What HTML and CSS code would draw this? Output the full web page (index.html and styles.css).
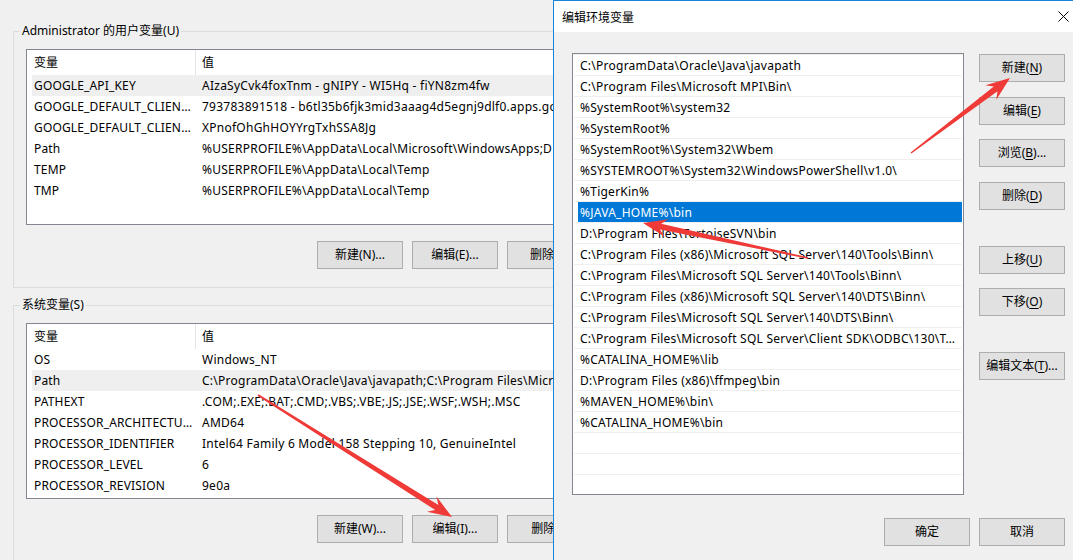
FILE: index.html
```html
<!DOCTYPE html>
<html lang="zh-CN">
<head>
<meta charset="utf-8">
<title>编辑环境变量</title>
<link rel="stylesheet" href="styles.css">
</head>
<body>
<div class="desk">
  <div class="env-window">
    <fieldset class="group">
      <legend>Administrator 的用户变量(U)</legend>
      <div class="list">
        <div class="list-head"><div class="hcell hname">变量</div><div class="hcell hval">值</div></div>
        <div class="row hl"><div class="cname">GOOGLE_API_KEY</div><div class="cval">AIzaSyCvk4foxTnm - gNIPY - WI5Hq - fiYN8zm4fw</div></div>
        <div class="row"><div class="cname">GOOGLE_DEFAULT_CLIENT_ID</div><div class="cval">793783891518 - b6tl35b6fjk3mid3aaag4d5egnj9dlf0.apps.go</div></div>
        <div class="row"><div class="cname">GOOGLE_DEFAULT_CLIENT_SECRET</div><div class="cval">XPnofOhGhHOYYrgTxhSSA8Jg</div></div>
        <div class="row"><div class="cname">Path</div><div class="cval">%USERPROFILE%\AppData\Local\Microsoft\WindowsApps;D</div></div>
        <div class="row"><div class="cname">TEMP</div><div class="cval">%USERPROFILE%\AppData\Local\Temp</div></div>
        <div class="row"><div class="cname">TMP</div><div class="cval">%USERPROFILE%\AppData\Local\Temp</div></div>
      </div>
      <div class="btns">
        <button class="btn">新建(N)...</button>
        <button class="btn">编辑(E)...</button>
        <button class="btn">删除(D)</button>
      </div>
    </fieldset>
    <fieldset class="group">
      <legend>系统变量(S)</legend>
      <div class="list">
        <div class="list-head"><div class="hcell hname">变量</div><div class="hcell hval">值</div></div>
        <div class="row"><div class="cname">OS</div><div class="cval">Windows_NT</div></div>
        <div class="row hl"><div class="cname">Path</div><div class="cval">C:\ProgramData\Oracle\Java\javapath;C:\Program Files\Micr</div></div>
        <div class="row"><div class="cname">PATHEXT</div><div class="cval">.COM;.EXE;.BAT;.CMD;.VBS;.VBE;.JS;.JSE;.WSF;.WSH;.MSC</div></div>
        <div class="row"><div class="cname">PROCESSOR_ARCHITECTURE</div><div class="cval">AMD64</div></div>
        <div class="row"><div class="cname">PROCESSOR_IDENTIFIER</div><div class="cval">Intel64 Family 6 Model 158 Stepping 10, GenuineIntel</div></div>
        <div class="row"><div class="cname">PROCESSOR_LEVEL</div><div class="cval">6</div></div>
        <div class="row"><div class="cname">PROCESSOR_REVISION</div><div class="cval">9e0a</div></div>
      </div>
      <div class="btns">
        <button class="btn">新建(W)...</button>
        <button class="btn">编辑(I)...</button>
        <button class="btn">删除(L)</button>
      </div>
    </fieldset>
  </div>

  <div class="dialog">
    <div class="titlebar">
      <span class="title">编辑环境变量</span>
      <span class="close"><svg width="11" height="11" viewBox="0 0 11 11"><path d="M0.5 0.5 L10.5 10.5 M10.5 0.5 L0.5 10.5" stroke="#000" stroke-width="1" fill="none"/></svg></span>
    </div>
    <div class="dlg-body">
      <div class="dlg-main">
        <div class="pathlist">
          <div class="prow"><span>C:\ProgramData\Oracle\Java\javapath</span></div>
          <div class="prow"><span>C:\Program Files\Microsoft MPI\Bin\</span></div>
          <div class="prow"><span>%SystemRoot%\system32</span></div>
          <div class="prow"><span>%SystemRoot%</span></div>
          <div class="prow"><span>%SystemRoot%\System32\Wbem</span></div>
          <div class="prow"><span>%SYSTEMROOT%\System32\WindowsPowerShell\v1.0\</span></div>
          <div class="prow"><span>%TigerKin%</span></div>
          <div class="prow sel"><span>%JAVA_HOME%\bin</span></div>
          <div class="prow"><span>D:\Program Files\TortoiseSVN\bin</span></div>
          <div class="prow"><span>C:\Program Files (x86)\Microsoft SQL Server\140\Tools\Binn\</span></div>
          <div class="prow"><span>C:\Program Files\Microsoft SQL Server\140\Tools\Binn\</span></div>
          <div class="prow"><span>C:\Program Files (x86)\Microsoft SQL Server\140\DTS\Binn\</span></div>
          <div class="prow"><span>C:\Program Files\Microsoft SQL Server\140\DTS\Binn\</span></div>
          <div class="prow"><span>C:\Program Files\Microsoft SQL Server\Client SDK\ODBC\130\Tools\Binn\</span></div>
          <div class="prow"><span>%CATALINA_HOME%\lib</span></div>
          <div class="prow"><span>D:\Program Files (x86)\ffmpeg\bin</span></div>
          <div class="prow"><span>%MAVEN_HOME%\bin\</span></div>
          <div class="prow"><span>%CATALINA_HOME%\bin</span></div>
          <div class="prow"><span></span></div>
          <div class="prow"><span></span></div>
          <div class="prow"><span></span></div>
        </div>
        <div class="side">
          <button class="btn">新建(<u>N</u>)</button>
          <button class="btn step">编辑(<u>E</u>)</button>
          <button class="btn step">浏览(<u>B</u>)...</button>
          <button class="btn step">删除(<u>D</u>)</button>
          <button class="btn far">上移(<u>U</u>)</button>
          <button class="btn near">下移(<u>O</u>)</button>
          <button class="btn far">编辑文本(<u>T</u>)...</button>
        </div>
      </div>
      <div class="dlg-foot">
        <button class="btn">确定</button>
        <button class="btn">取消</button>
      </div>
    </div>
  </div>

  <svg class="marks" width="1073" height="560" viewBox="0 0 1073 560">
    <polygon points="911.4,153.6 997.5,91.3 996.3,99.7 1010,78 985.4,85.3 993.8,86.5 910.6,152.4"/>
    <polygon points="808.1,257.3 661.2,223.8 668.3,219.2 643,223 664.6,236.8 660.0,229.6 807.9,258.7"/>
    <polygon points="257.4,395.8 435.2,509.9 426.9,511.8 452,517 436.5,496.6 438.4,504.9 258.6,394.2"/>
  </svg>
</div>
</body>
</html>
```

FILE: styles.css
```css
* { box-sizing: border-box; }
html, body { margin: 0; padding: 0; }
body {
  width: 1073px;
  height: 560px;
  overflow: hidden;
  background: #f0f0f0;
  font-family: "Noto Sans", "Noto Sans CJK SC", sans-serif;
  font-size: 12px;
  color: #000;
}
.desk {
  position: relative;
  width: 1073px;
  height: 560px;
  overflow: hidden;
}

/* background window (its right part is hidden behind the dialog) */
.env-window {
  position: absolute;
  left: 0;
  top: 0;
  width: 553px;
  height: 560px;
  overflow: hidden;
  padding: 23px 0 0 13px;
}
.group {
  margin: 0 0 9px 0;
  width: 650px;
  min-inline-size: 0;
  border: 1px solid #dcdcdc;
  padding: 10px 0 18px 12px;
}
.group legend {
  margin-left: -6px;
  padding: 0 2px;
  line-height: 16px;
}
.list {
  width: 620px;
  height: 176px;
  border: 1px solid #828790;
  background: #fff;
  overflow: hidden;
}
.list-head {
  display: flex;
  height: 25px;
  line-height: 25px;
}
.hname {
  width: 169px;
  padding-left: 7px;
  border-right: 1px solid #e5e5e5;
}
.hval { padding-left: 6px; }
.row {
  display: flex;
  height: 21px;
  line-height: 22px;
  margin-left: 5px;
  white-space: nowrap;
  letter-spacing: 0.25px;
}
.row.hl { background: #efefef; }
.cname {
  flex: none;
  width: 163px;
  padding: 0 0 0 2px;
  overflow: hidden;
  text-overflow: ellipsis;
  letter-spacing: 0.15px;
}
.cval { padding-left: 7px; }

.btns {
  display: flex;
  gap: 9px;
  margin-top: 16px;
  padding-left: 291px;
}
.btn {
  flex: none;
  width: 86px;
  height: 28px;
  padding: 0;
  margin: 0;
  background: #e1e1e1;
  border: 1px solid #adadad;
  font: inherit;
  color: #000;
  white-space: nowrap;
  line-height: 26px;
}
.btn u { text-underline-offset: 2px; }

/* front dialog */
.dialog {
  position: absolute;
  left: 553px;
  top: 0;
  width: 534px;
  height: 580px;
  background: #f0f0f0;
  border: 1px solid #1883d7;
}
.titlebar {
  height: 31px;
  background: #fff;
  display: flex;
  align-items: center;
  justify-content: space-between;
  padding-left: 8px;
}
.close {
  width: 46px;
  height: 31px;
  display: flex;
  align-items: center;
  justify-content: center;
}
.dlg-body { padding: 21px 21px 0 18px; }
.dlg-main {
  display: flex;
  gap: 15px;
  align-items: flex-start;
}
.pathlist {
  flex: none;
  width: 392px;
  height: 442px;
  border: 1px solid #828790;
  background: #fff;
  padding: 0 1px;
  overflow: hidden;
}
.prow {
  display: flex;
  height: 21px;
  border-top: 1px solid #efefef;
  padding-left: 4px;
}
.prow span {
  flex: 1;
  min-width: 0;
  padding: 1px 6px 0 2px;
  line-height: 20px;
  white-space: nowrap;
  overflow: hidden;
  text-overflow: ellipsis;
  letter-spacing: 0.25px;
}
.prow.sel span { background: #0078d7; color: #fff; }
.side {
  display: flex;
  flex-direction: column;
  padding-top: 1px;
}
.side .step { margin-top: 14.67px; }
.side .far { margin-top: 36px; }
.side .near { margin-top: 14px; }
.dlg-foot {
  display: flex;
  justify-content: flex-end;
  gap: 9px;
  margin-top: 23px;
}

/* annotation arrows */
.marks {
  position: absolute;
  left: 0;
  top: 0;
  pointer-events: none;
  fill: #ef3a37;
}
```
